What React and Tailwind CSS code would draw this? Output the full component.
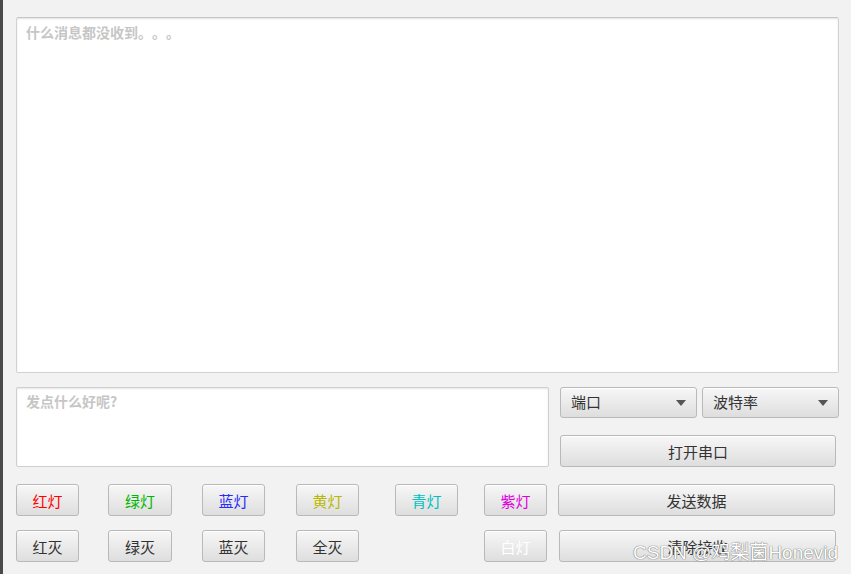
import React from "react";

const btn =
  "h-[32px] flex items-center justify-center rounded-[3px] border border-[#b9b9b9] bg-gradient-to-b from-[#f7f7f7] to-[#dedede] text-[15px] leading-none shadow-[inset_0_1px_0_#ffffff]";

function Btn({ w, ml, color, children }) {
  return (
    <div className={btn} style={{ width: w, marginLeft: ml, color }}>
      {children}
    </div>
  );
}

function Combo({ label }) {
  return (
    <div className="h-[31px] w-[137px] flex items-center justify-between pl-[10px] pr-[10px] rounded-[3px] border border-[#b9b9b9] bg-gradient-to-b from-[#f7f7f7] to-[#dedede] text-[15px] text-[#333] shadow-[inset_0_1px_0_#ffffff]">
      <span>{label}</span>
      <svg width="10" height="6" viewBox="0 0 10 6">
        <path d="M0 0 L10 0 L5 6 Z" fill="#555" />
      </svg>
    </div>
  );
}

export default function App() {
  return (
    <div
      className="relative w-[851px] h-[574px] bg-[#f2f2f2] flex overflow-hidden"
      style={{ fontFamily: '"Noto Sans CJK SC", "Noto Sans", sans-serif' }}
    >
      <div className="w-[3px] h-full bg-[#4a4a4a] shrink-0" />
      <div className="flex flex-col pl-[13px] pt-[17px]">
        {/* receive area */}
        <div className="w-[823px] h-[356px] bg-white border border-[#d2d2d2] border-t-[#c6c6c6] rounded-[2px] shadow-[inset_0_1px_2px_rgba(0,0,0,0.12)] px-[9px] pt-[4px]">
          <div className="text-[14px] leading-[20px] font-bold text-[#c6c6c6] [text-spacing-trim:space-all]">
            什么消息都没收到。。。
          </div>
        </div>

        {/* send + controls */}
        <div className="flex mt-[14px]">
          <div className="w-[533px] h-[80px] bg-white border border-[#cfcfcf] rounded-[2px] shadow-[inset_0_1px_2px_rgba(0,0,0,0.1)] px-[9px] pt-[3px]">
            <div className="text-[14px] leading-[20px] font-bold text-[#c6c6c6]">发点什么好呢?</div>
          </div>
          <div className="flex flex-col ml-[11px]">
            <div className="flex gap-[5px]">
              <Combo label="端口" />
              <Combo label="波特率" />
            </div>
            <div className={btn + " w-[276px] mt-[17px] text-[#333]"}>打开串口</div>
          </div>
        </div>

        {/* row 1 */}
        <div className="flex mt-[17px]">
          <Btn w={63} ml={0} color="#ff0000">红灯</Btn>
          <Btn w={64} ml={29} color="#00b800">绿灯</Btn>
          <Btn w={63} ml={30} color="#2a2aff">蓝灯</Btn>
          <Btn w={63} ml={31} color="#b8b800">黄灯</Btn>
          <Btn w={63} ml={36} color="#00c0c0">青灯</Btn>
          <Btn w={63} ml={26} color="#e000e0">紫灯</Btn>
          <Btn w={277} ml={11} color="#333">发送数据</Btn>
        </div>

        {/* row 2 */}
        <div className="flex mt-[14px]">
          <Btn w={63} ml={0} color="#333">红灭</Btn>
          <Btn w={64} ml={29} color="#333">绿灭</Btn>
          <Btn w={63} ml={30} color="#333">蓝灭</Btn>
          <Btn w={63} ml={31} color="#333">全灭</Btn>
          <Btn w={63} ml={125} color="#ffffff">白灯</Btn>
          <Btn w={277} ml={12} color="#333">清除接收</Btn>
        </div>
      </div>

      <div
        className="absolute left-[633px] top-[541px] text-[19px] leading-[24px] text-white [text-shadow:0_0_1px_#6a6a6a,0_0_1px_#6a6a6a] whitespace-nowrap"
        style={{ fontFamily: '"Liberation Sans", "Noto Sans CJK SC", sans-serif' }}
      >
        CSDN @鸡梨菌Honevid
      </div>
    </div>
  );
}
